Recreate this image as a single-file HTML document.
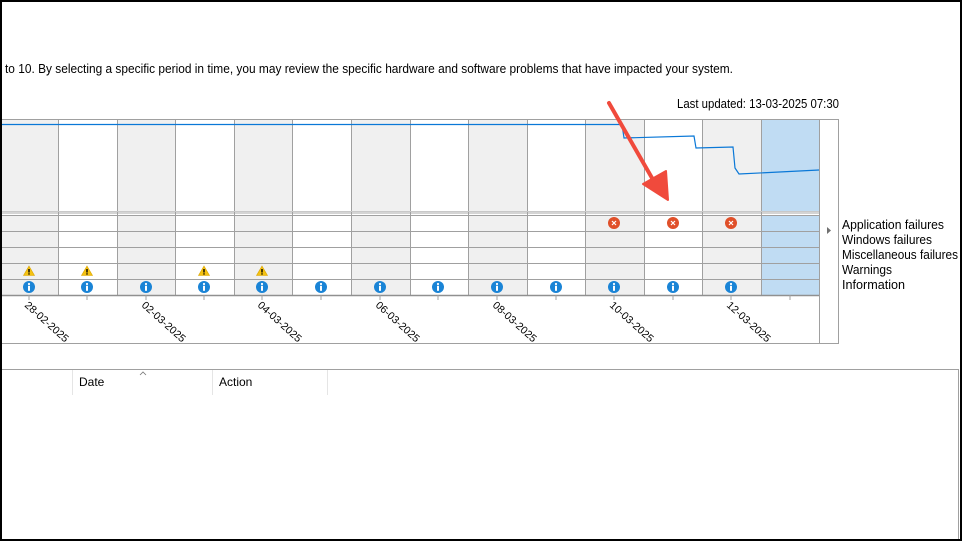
<!DOCTYPE html>
<html><head><meta charset="utf-8"><style>
html,body{margin:0;padding:0;background:#fff}
body{width:962px;height:541px;overflow:hidden;position:relative;font-family:"Liberation Sans",sans-serif}
</style></head><body>
<svg width="962" height="541" style="position:absolute;left:0;top:0" font-family="Liberation Sans, sans-serif">
<rect x="0" y="0" width="962" height="541" fill="#fff"/>
<text x="5" y="73" font-size="12.5" fill="#000" textLength="728" lengthAdjust="spacingAndGlyphs">to 10. By selecting a specific period in time, you may review the specific hardware and software problems that have impacted your system.</text>
<text x="677" y="108" font-size="12.5" fill="#000" textLength="162" lengthAdjust="spacingAndGlyphs">Last updated: 13-03-2025 07:30</text>
<g id="cols">
<rect x="0" y="119" width="58" height="176" fill="#f0f0f0"/>
<rect x="117" y="119" width="58" height="176" fill="#f0f0f0"/>
<rect x="234" y="119" width="58" height="176" fill="#f0f0f0"/>
<rect x="351" y="119" width="59" height="176" fill="#f0f0f0"/>
<rect x="468" y="119" width="59" height="176" fill="#f0f0f0"/>
<rect x="585" y="119" width="59" height="176" fill="#f0f0f0"/>
<rect x="702" y="119" width="59" height="176" fill="#f0f0f0"/>
<rect x="761" y="119" width="58" height="176" fill="#c0dcf3"/>
</g>
<rect x="0" y="211" width="819" height="5" fill="#fff"/>
<rect x="0" y="212" width="819" height="2" fill="#d4d4d4"/>
<g stroke="#a0a0a0" stroke-width="1">
<line x1="58.5" y1="119" x2="58.5" y2="295"/><line x1="117.5" y1="119" x2="117.5" y2="295"/>
<line x1="175.5" y1="119" x2="175.5" y2="295"/><line x1="234.5" y1="119" x2="234.5" y2="295"/>
<line x1="292.5" y1="119" x2="292.5" y2="295"/><line x1="351.5" y1="119" x2="351.5" y2="295"/>
<line x1="410.5" y1="119" x2="410.5" y2="295"/><line x1="468.5" y1="119" x2="468.5" y2="295"/>
<line x1="527.5" y1="119" x2="527.5" y2="295"/><line x1="585.5" y1="119" x2="585.5" y2="295"/>
<line x1="644.5" y1="119" x2="644.5" y2="295"/><line x1="702.5" y1="119" x2="702.5" y2="295"/>
<line x1="761.5" y1="119" x2="761.5" y2="295"/>
<line x1="0" y1="119.5" x2="819" y2="119.5"/>
<line x1="0" y1="211.5" x2="819" y2="211.5" stroke="#c8c8c8"/>
<line x1="0" y1="215.5" x2="819" y2="215.5"/>
<line x1="0" y1="231.5" x2="819" y2="231.5"/>
<line x1="0" y1="247.5" x2="819" y2="247.5"/>
<line x1="0" y1="263.5" x2="819" y2="263.5"/>
<line x1="0" y1="279.5" x2="819" y2="279.5"/>
<line x1="0" y1="295.5" x2="819" y2="295.5" stroke="#909090" stroke-width="1.5"/>
<line x1="819.5" y1="119" x2="819.5" y2="343"/>
<line x1="838.5" y1="119" x2="838.5" y2="343"/>
<line x1="819" y1="119.5" x2="838" y2="119.5"/>
<line x1="0" y1="343.5" x2="839" y2="343.5"/>
</g>
<g stroke="#a0a0a0">
<line x1="29" y1="295" x2="29" y2="300"/><line x1="87" y1="295" x2="87" y2="300"/><line x1="146" y1="295" x2="146" y2="300"/><line x1="204" y1="295" x2="204" y2="300"/><line x1="262" y1="295" x2="262" y2="300"/><line x1="321" y1="295" x2="321" y2="300"/><line x1="380" y1="295" x2="380" y2="300"/><line x1="438" y1="295" x2="438" y2="300"/><line x1="497" y1="295" x2="497" y2="300"/><line x1="556" y1="295" x2="556" y2="300"/><line x1="614" y1="295" x2="614" y2="300"/><line x1="673" y1="295" x2="673" y2="300"/><line x1="731" y1="295" x2="731" y2="300"/><line x1="790" y1="295" x2="790" y2="300"/>
</g>
<polyline fill="none" stroke="#0a78d7" stroke-width="1.2" points="0,124.5 622,124.5 624,138 694,136 696,148 733,147 735,168 739,174 819,170"/>
<defs>
<g id="inf"><circle r="6" fill="#1a84d6"/><circle cx="0" cy="-3" r="1.1" fill="#fff"/><rect x="-1" y="-1.2" width="2" height="5" fill="#fff"/></g>
<g id="err"><circle r="6" fill="#e0502a"/><path d="M-2,-2L2,2M2,-2L-2,2" stroke="#fff" stroke-width="1.2"/></g>
<g id="wrn"><path d="M0,-5L5.5,4.5H-5.5Z" fill="#f5c211" stroke="#d9a400" stroke-width="0.6"/><rect x="-0.7" y="-2" width="1.4" height="3.5" fill="#000"/><rect x="-0.7" y="2.3" width="1.4" height="1.3" fill="#000"/></g>
</defs>
<use href="#inf" x="29" y="287"/><use href="#inf" x="87" y="287"/><use href="#inf" x="146" y="287"/><use href="#inf" x="204" y="287"/><use href="#inf" x="262" y="287"/><use href="#inf" x="321" y="287"/><use href="#inf" x="380" y="287"/><use href="#inf" x="438" y="287"/><use href="#inf" x="497" y="287"/><use href="#inf" x="556" y="287"/><use href="#inf" x="614" y="287"/><use href="#inf" x="673" y="287"/><use href="#inf" x="731" y="287"/>
<use href="#wrn" x="29" y="271"/><use href="#wrn" x="87" y="271"/><use href="#wrn" x="204" y="271"/><use href="#wrn" x="262" y="271"/>
<use href="#err" x="614" y="223"/><use href="#err" x="673" y="223"/><use href="#err" x="731" y="223"/>
<g font-size="10.5" fill="#000">
<text transform="translate(24,306) rotate(42)" textLength="55" lengthAdjust="spacingAndGlyphs">28-02-2025</text>
<text transform="translate(141,306) rotate(42)" textLength="55" lengthAdjust="spacingAndGlyphs">02-03-2025</text>
<text transform="translate(257,306) rotate(42)" textLength="55" lengthAdjust="spacingAndGlyphs">04-03-2025</text>
<text transform="translate(375,306) rotate(42)" textLength="55" lengthAdjust="spacingAndGlyphs">06-03-2025</text>
<text transform="translate(492,306) rotate(42)" textLength="55" lengthAdjust="spacingAndGlyphs">08-03-2025</text>
<text transform="translate(609,306) rotate(42)" textLength="55" lengthAdjust="spacingAndGlyphs">10-03-2025</text>
<text transform="translate(726,306) rotate(42)" textLength="55" lengthAdjust="spacingAndGlyphs">12-03-2025</text>
</g>
<path d="M827,227L831,230.5L827,234Z" fill="#707070"/>
<g font-size="12.5" fill="#000">
<text x="842" y="229" textLength="102" lengthAdjust="spacingAndGlyphs">Application failures</text>
<text x="842" y="244" textLength="90" lengthAdjust="spacingAndGlyphs">Windows failures</text>
<text x="842" y="259" textLength="116" lengthAdjust="spacingAndGlyphs">Miscellaneous failures</text>
<text x="842" y="274" textLength="50" lengthAdjust="spacingAndGlyphs">Warnings</text>
<text x="842" y="289" textLength="63" lengthAdjust="spacingAndGlyphs">Information</text>
</g>
<line x1="609" y1="103" x2="652" y2="178" stroke="#f04a3c" stroke-width="4" stroke-linecap="round"/>
<path d="M643,184L666,171L668,200Z" fill="#f04a3c" stroke="#f04a3c" stroke-width="2" stroke-linejoin="round"/>
<rect x="0.5" y="369.5" width="958" height="180" fill="none" stroke="#a0a0a0"/>
<g stroke="#e5e5e5"><line x1="72.5" y1="370" x2="72.5" y2="395"/><line x1="212.5" y1="370" x2="212.5" y2="395"/><line x1="327.5" y1="370" x2="327.5" y2="395"/></g>
<path d="M140,375L143,372L146,375" fill="none" stroke="#777" stroke-width="0.8"/>
<text x="79" y="386" font-size="12" fill="#000">Date</text>
<text x="219" y="386" font-size="12" fill="#000">Action</text>
<rect x="1" y="1" width="960" height="539" fill="none" stroke="#000" stroke-width="2"/>
</svg>
</body></html>
